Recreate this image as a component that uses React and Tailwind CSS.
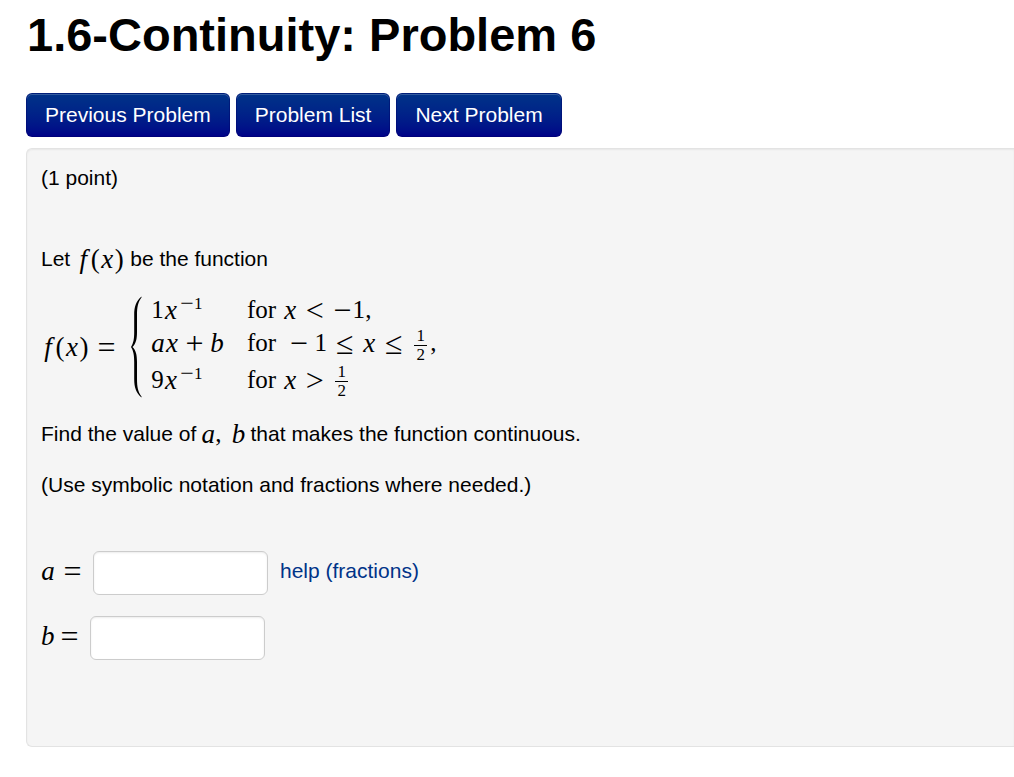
import React, { useState } from 'react';

const navLinks = ['Previous Problem', 'Problem List', 'Next Problem'];

const mathFont = "font-['Liberation_Serif',serif] text-[25px] leading-[30px]";

const Var = ({ children, width = 'w-[14px]' }) => (
  <i className={`inline-block text-center text-[27px] leading-[28px] ${width}`}>{children}</i>
);

const Num = ({ children }) => (
  <span className="inline-block w-[13px] text-center">{children}</span>
);

// Relations and operators are set larger so they are as wide as in TeX
const Op = ({ children, width = 'w-[35px]' }) => (
  <span className={`inline-block text-center text-[32px] leading-[24px] ${width}`}>
    {children}
  </span>
);

const Paren = ({ children }) => (
  <span className="inline-block w-[10px] text-center text-[27px] leading-[28px]">{children}</span>
);

const FofX = () => (
  <>
    <Var>f</Var>
    <Paren>(</Paren>
    <Var>x</Var>
    <Paren>)</Paren>
  </>
);

const Power = () => (
  <span className="ml-[2px] inline-flex items-center self-start text-[17px] leading-[17px]">
    <span className="w-[14px] text-center text-[24px] leading-[17px]">−</span>
    <span>1</span>
  </span>
);

const Half = () => (
  <span className="inline-flex w-[13px] flex-col pt-1 text-center text-[17px] leading-[16px]">
    <span className="border-b border-black pb-px">1</span>
    <span className="pt-px">2</span>
  </span>
);

const For = () => <span className="mr-[7px]">for</span>;

const Brace = () => (
  <svg width="11" height="102" viewBox="0 0 11 102" className="shrink-0" aria-hidden="true">
    <path d="M10.5 0.5C5 5 3.2 11 3.2 19V36C3.2 43 2.5 47 0 51C2.5 55 3.2 59 3.2 66V83C3.2 91 5 97 10.5 101.5V100.5C7 96 6 91 6 83V66C6 59 5 54.500 1.500 51C5 47.500 6 43 6 36V19C6 11 7 6 10.5 1.500Z" />
  </svg>
);

const Cases = () => (
  <div className={`flex items-center ${mathFont}`}>
    <div className="flex items-center">
      <FofX />
      <Op>=</Op>
    </div>
    <div className="ml-[7px] flex items-center gap-[9px]">
      <Brace />
      <div className="grid grid-cols-[96px_auto] grid-rows-[30px_36px_37px] items-center whitespace-nowrap">
        <div className="flex items-center">
          <Num>1</Num>
          <Var>x</Var>
          <Power />
        </div>
        <div className="flex items-center">
          <For />
          <Var>x</Var>
          <Op>&lt;</Op>
          <Op width="w-[20px]">−</Op>
          <Num>1</Num>
          <span>,</span>
        </div>

        <div className="flex items-center">
          <Var>a</Var>
          <Var>x</Var>
          <Op width="w-[31px]">+</Op>
          <Var>b</Var>
        </div>
        <div className="flex items-center">
          <For />
          <Op width="w-[31px]">−</Op>
          <Num>1</Num>
          <Op>≤</Op>
          <Var>x</Var>
          <Op>≤</Op>
          <span className="ml-[3px] flex items-center gap-[3px]">
            <Half />
            <span>,</span>
          </span>
        </div>

        <div className="flex items-center">
          <Num>9</Num>
          <Var>x</Var>
          <Power />
        </div>
        <div className="flex items-center">
          <For />
          <Var>x</Var>
          <Op>&gt;</Op>
          <span className="ml-[3px] flex">
            <Half />
          </span>
        </div>
      </div>
    </div>
  </div>
);

const AnswerRow = ({ name, width, value, onChange, children }) => (
  <div className="flex items-start">
    <label
      htmlFor={`answer-${name}`}
      className="mr-[3px] flex h-10 items-center font-['Liberation_Serif',serif] text-[25px] leading-[30px]"
    >
      <Var width={width}>{name}</Var>
      <Op>=</Op>
    </label>
    <input
      id={`answer-${name}`}
      type="text"
      value={value}
      onChange={(e) => onChange(name, e.target.value)}
      className="h-11 w-[175px] rounded-md border border-[#cccccc] bg-white px-2 shadow-[inset_0_1px_2px_rgba(0,0,0,0.08)]"
    />
    {children}
  </div>
);

const App = () => {
  const [answers, setAnswers] = useState({ a: '', b: '' });

  const handleChange = (name, value) => {
    setAnswers({ ...answers, [name]: value });
  };

  return (
    <main className="bg-white pt-[5px] pb-[30px] pl-[26px] font-['Liberation_Sans',Arial,sans-serif] text-[21px] leading-[30px] text-black">
      <h1 className="pl-px text-[47px] leading-[60px] font-bold">1.6-Continuity: Problem 6</h1>

      {/* Navigation */}
      <nav className="mt-7 flex flex-wrap gap-[6px]">
        {navLinks.map((label) => (
          <a
            key={label}
            href="#"
            className="flex h-11 items-center rounded-md border border-[#000066]/40 bg-linear-to-b from-[#003388] to-[#000088] bg-origin-border px-[18px] text-white shadow-[inset_0_1px_0_rgba(255,255,255,0.2)]"
          >
            {label}
          </a>
        ))}
      </nav>

      {/* Problem */}
      <section className="mt-[11px] rounded-l-md border border-r-0 border-[#e3e3e3] bg-[#f5f5f5] px-[14px] pt-[14px] pb-[86px] shadow-[inset_0_1px_2px_rgba(0,0,0,0.06)]">
        <p>(1 point)</p>
        <p className="mt-[51px] flex items-center">
          Let
          <span className={`mx-[6px] flex items-center ${mathFont}`}>
            <FofX />
          </span>
          be the function
        </p>
        <div className="mt-[21px]">
          <Cases />
        </div>
        <p className="mt-[21px] flex items-center">
          Find the value of
          <span className={`mx-[5px] flex items-center ${mathFont}`}>
            <Var>a</Var>
            <span className="mr-[10px]">,</span>
            <Var>b</Var>
          </span>
          that makes the function continuous.
        </p>
        <p className="mt-[21px]">(Use symbolic notation and fractions where needed.)</p>

        <form className="mt-[51px] flex flex-col gap-[21px]" onSubmit={(e) => e.preventDefault()}>
          <AnswerRow name="a" width="w-[14px]" value={answers.a} onChange={handleChange}>
            <a href="#" className="ml-3 leading-10 text-[#003388]">
              help (fractions)
            </a>
          </AnswerRow>
          <AnswerRow name="b" width="w-[11px]" value={answers.b} onChange={handleChange} />
        </form>
      </section>
    </main>
  );
};

export default App;
